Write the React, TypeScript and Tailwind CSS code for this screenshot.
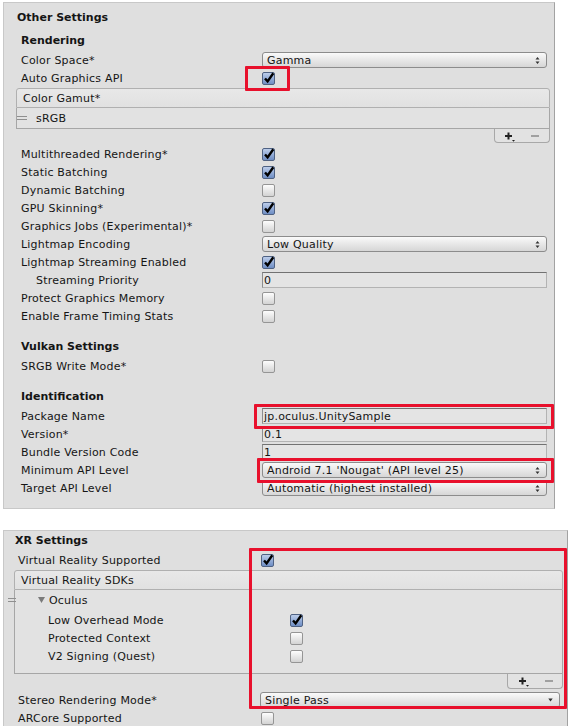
import React from "react";

const Check = ({ on }: { on?: boolean }) =>
  on ? (
    <div className="relative w-[13px] h-[13px] rounded-[2px] border border-[#4f6283] bg-linear-to-b from-[#bccdea] to-[#6f8ec4] shrink-0">
      <svg className="absolute left-[0px] top-[-2px]" width="12" height="13" viewBox="0 0 12 13">
        <path d="M2 7.5 L4.6 10.4 L10.3 2.2" fill="none" stroke="#000" strokeWidth="2.4" />
      </svg>
    </div>
  ) : (
    <div className="w-[13px] h-[13px] rounded-[2px] border border-[#959595] bg-linear-to-b from-[#fdfdfd] to-[#d3d3d3] shrink-0" />
  );

const UpDown = () => (
  <svg width="5" height="9" viewBox="0 0 5 9">
    <path d="M0.5 3.6 L2.5 1 L4.5 3.6 Z M0.5 5.4 L2.5 8 L4.5 5.4 Z" fill="#333" />
  </svg>
);

const Down = () => (
  <svg width="5" height="4" viewBox="0 0 5 4">
    <path d="M0.3 0.5 L4.7 0.5 L2.5 3.5 Z" fill="#333" />
  </svg>
);

const Drop = ({ text, single }: { text: string; single?: boolean }) => (
  <div className="h-[16px] w-full rounded-[3px] border border-[#8c8c8c] bg-linear-to-b from-[#fafafa] to-[#d6d6d6] flex items-center pl-[4px] pr-[6px]">
    <span className="flex-1 whitespace-nowrap overflow-hidden">{text}</span>
    {single ? <Down /> : <UpDown />}
  </div>
);

const Field = ({ text }: { text: string }) => (
  <div className="h-[16px] w-full border border-[#b3b3b3] border-t-[#727272] border-l-[#8e8e8e] bg-[#e4e4e4] flex items-center pl-[1px] whitespace-nowrap">
    {text}
  </div>
);

const Handle = () => (
  <div className="flex flex-col gap-[2px] w-[10px] shrink-0">
    <div className="h-px bg-[#8f8f8f]" />
    <div className="h-px bg-[#8f8f8f]" />
  </div>
);

const PlusMinusIcons = () => (
  <>
    <svg width="11" height="10" viewBox="0 0 11 10">
      <path d="M0 4 H7 M3.5 0.5 V7.5" stroke="#222" strokeWidth="2" />
      <path d="M7 8 L10 8 L8.5 9.8 Z" fill="#222" />
    </svg>
    <div className="ml-[15px] mt-[3px] w-[8px] h-[2px] bg-[#a0a0a0]" />
  </>
);

const TopRow = ({ label, children, indent }: { label: string; children: React.ReactNode; indent?: boolean }) => (
  <div className="flex items-center h-[18px]">
    <div className={indent ? "w-[258px] pl-[32px] whitespace-nowrap" : "w-[258px] pl-[17px] whitespace-nowrap"}>{label}</div>
    <div className="w-[285px] flex items-center">{children}</div>
  </div>
);

const XRRow = ({ label, children }: { label: string; children: React.ReactNode }) => (
  <div className="flex items-center h-[18px]">
    <div className="w-[256px] pl-[14px] whitespace-nowrap">{label}</div>
    <div className="w-[300px] flex items-center">{children}</div>
  </div>
);

const SubRow = ({ label, on }: { label: string; on?: boolean }) => (
  <div className="flex items-center h-[18px]">
    <div className="w-[275px] pl-[33px] whitespace-nowrap">{label}</div>
    <Check on={on} />
  </div>
);

export default function App() {
  return (
    <div className="relative w-[574px] h-[726px] overflow-hidden bg-white font-['DejaVu_Sans',sans-serif] text-[11px] tracking-[0.2px] text-[#151515] leading-none">
      {/* Other Settings panel */}
      <div className="ml-[3px] mt-[2px] w-[552px] h-[507px] bg-[#dfdfdf] border border-[#c8c8c8] border-r-[#a2a2a2] flex flex-col">
        <div className="mt-[5px] h-[18px] flex items-center pl-[13px] font-bold tracking-normal">Other Settings</div>
        <div className="mt-[5px] h-[18px] flex items-center pl-[17px] font-bold tracking-normal">Rendering</div>
        <div className="mt-[2px]">
          <TopRow label="Color Space*">
            <Drop text="Gamma" />
          </TopRow>
          <TopRow label="Auto Graphics API">
            <Check on />
          </TopRow>
        </div>
        <div className="mt-[1px] ml-[12px] w-[534px] flex flex-col">
          <div className="h-[20px] border border-[#b0b0b0] rounded-t-[3px] bg-linear-to-b from-[#e8e8e8] to-[#e1e1e1] flex items-center pl-[6px]">
            Color Gamut*
          </div>
          <div className="h-[21px] border-x border-b border-[#a6a6a6] bg-[#e2e2e2] flex items-center">
            <Handle />
            <span className="ml-[9px]">sRGB</span>
          </div>
          <div className="flex justify-end">
            <div className="w-[56px] h-[14px] border-x border-b border-[#a8a8a8] rounded-b-[4px] bg-[#e2e2e2] flex items-start pt-[3px] pl-[10px]">
              <PlusMinusIcons />
            </div>
          </div>
        </div>
        <div className="mt-[2px]">
          <TopRow label="Multithreaded Rendering*"><Check on /></TopRow>
          <TopRow label="Static Batching"><Check on /></TopRow>
          <TopRow label="Dynamic Batching"><Check /></TopRow>
          <TopRow label="GPU Skinning*"><Check on /></TopRow>
          <TopRow label="Graphics Jobs (Experimental)*"><Check /></TopRow>
          <TopRow label="Lightmap Encoding"><Drop text="Low Quality" /></TopRow>
          <TopRow label="Lightmap Streaming Enabled"><Check on /></TopRow>
          <TopRow label="Streaming Priority" indent><Field text="0" /></TopRow>
          <TopRow label="Protect Graphics Memory"><Check /></TopRow>
          <TopRow label="Enable Frame Timing Stats"><Check /></TopRow>
        </div>
        <div className="mt-[12px] h-[18px] flex items-center pl-[17px] font-bold tracking-normal">Vulkan Settings</div>
        <div className="mt-[2px]">
          <TopRow label="SRGB Write Mode*"><Check /></TopRow>
        </div>
        <div className="mt-[12px] h-[18px] flex items-center pl-[17px] font-bold tracking-normal">Identification</div>
        <div className="mt-[2px]">
          <TopRow label="Package Name"><Field text="jp.oculus.UnitySample" /></TopRow>
          <TopRow label="Version*"><Field text="0.1" /></TopRow>
          <TopRow label="Bundle Version Code"><Field text="1" /></TopRow>
          <TopRow label="Minimum API Level"><Drop text="Android 7.1 'Nougat' (API level 25)" /></TopRow>
          <TopRow label="Target API Level"><Drop text="Automatic (highest installed)" /></TopRow>
        </div>
      </div>

      {/* XR Settings panel */}
      <div className="ml-[3px] mt-[21px] w-[565px] h-[200px] bg-[#dfdfdf] border border-[#c8c8c8] border-r-[#a2a2a2] flex flex-col">
        <div className="h-[18px] flex items-center pl-[11px] font-bold tracking-normal">XR Settings</div>
        <div className="mt-[2px]">
          <XRRow label="Virtual Reality Supported">
            <div className="ml-[1px]"><Check on /></div>
          </XRRow>
        </div>
        <div className="mt-[1px] ml-[10px] w-[549px] flex flex-col">
          <div className="h-[20px] border border-[#b0b0b0] rounded-t-[3px] bg-linear-to-b from-[#e8e8e8] to-[#e1e1e1] flex items-center pl-[6px]">
            Virtual Reality SDKs
          </div>
          <div className="h-[84px] border-x border-b border-[#a6a6a6] bg-[#e2e2e2] flex flex-col pt-[1px]">
            <div className="h-[18px] flex items-center">
              <div className="ml-[-7px] w-[8px] flex flex-col gap-[2px] shrink-0">
                <div className="h-px bg-[#8f8f8f]" />
                <div className="h-px bg-[#8f8f8f]" />
              </div>
              <svg className="ml-[22px]" width="7" height="6" viewBox="0 0 7 6">
                <path d="M0 0 L7 0 L3.5 6 Z" fill="#7a7a7a" />
              </svg>
              <span className="ml-[4px]">Oculus</span>
            </div>
            <div className="mt-[2px]">
              <SubRow label="Low Overhead Mode" on />
              <SubRow label="Protected Context" />
              <SubRow label="V2 Signing (Quest)" />
            </div>
          </div>
          <div className="flex justify-end">
            <div className="w-[56px] h-[15px] border-x border-b border-[#a8a8a8] rounded-b-[4px] bg-[#e2e2e2] flex items-start pt-[3px] pl-[11px]">
              <PlusMinusIcons />
            </div>
          </div>
        </div>
        <div className="mt-[2px]">
          <XRRow label="Stereo Rendering Mode*">
            <Drop text="Single Pass" single />
          </XRRow>
          <XRRow label="ARCore Supported">
            <div className="ml-[1px]"><Check /></div>
          </XRRow>
        </div>
      </div>

      {/* red annotation boxes */}
      <div className="absolute left-[245px] top-[66px] w-[45px] h-[25px] border-[3px] border-[#e8102c] rounded-[1px]" />
      <div className="absolute left-[254px] top-[404px] w-[300px] h-[25px] border-[3px] border-[#e8102c] rounded-[1px]" />
      <div className="absolute left-[257px] top-[458px] w-[297px] h-[25px] border-[3px] border-[#e8102c] rounded-[1px]" />
      <div className="absolute left-[249px] top-[548px] w-[318px] h-[161px] border-[3px] border-[#e8102c] rounded-[1px]" />
    </div>
  );
}
